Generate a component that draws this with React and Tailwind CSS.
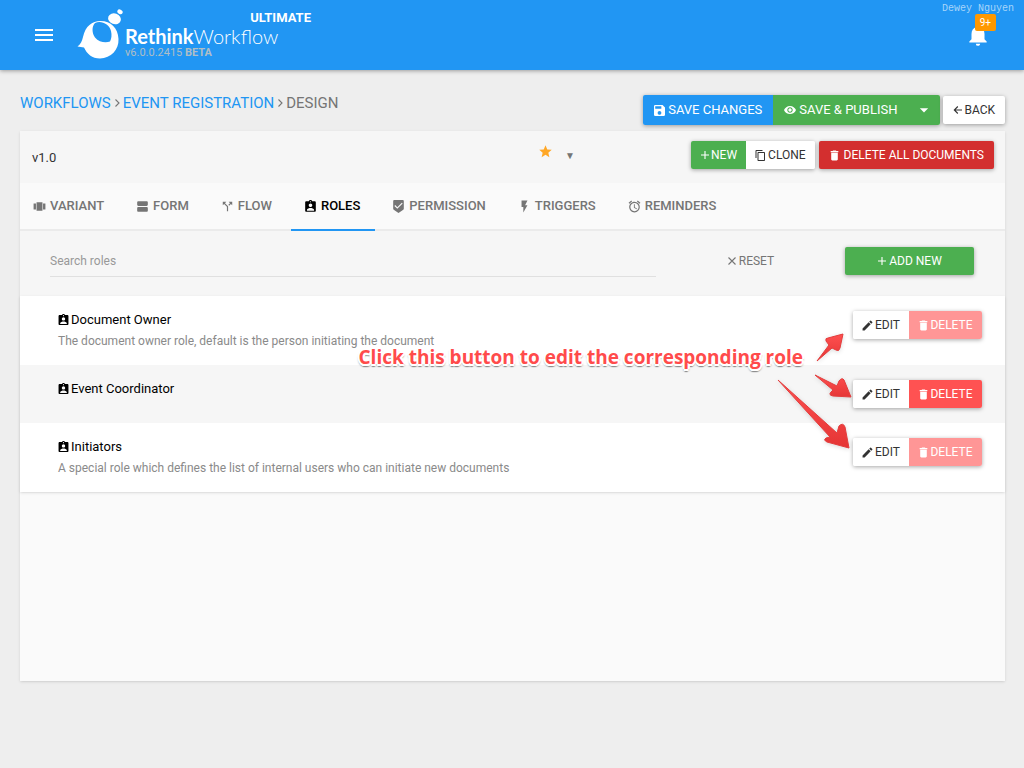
import { useState } from 'react';
import {
    MdMenu, MdNotifications, MdSave, MdRemoveRedEye, MdArrowDropDown, MdDelete, MdEdit, MdStar,
    MdViewCarousel, MdViewAgenda, MdCallSplit, MdAssignmentInd, MdBeenhere, MdFlashOn, MdAlarm, MdContentCopy,
} from 'react-icons/md';

const tabs = [
    { id: 'variant', label: 'VARIANT', icon: MdViewCarousel },
    { id: 'form', label: 'FORM', icon: MdViewAgenda },
    { id: 'flow', label: 'FLOW', icon: MdCallSplit },
    { id: 'roles', label: 'ROLES', icon: MdAssignmentInd },
    { id: 'permission', label: 'PERMISSION', icon: MdBeenhere },
    { id: 'triggers', label: 'TRIGGERS', icon: MdFlashOn },
    { id: 'reminders', label: 'REMINDERS', icon: MdAlarm },
];

const roles = [
    { name: 'Document Owner', description: 'The document owner role, default is the person initiating the document', locked: true },
    { name: 'Event Coordinator', description: '', locked: false },
    { name: 'Initiators', description: 'A special role which defines the list of internal users who can initiate new documents', locked: true },
];

const arrows = [
    'M47 36 L59 20 L56 16 Q55 13 58 13 L73 9 L70 23 Q69 27 66 25 L62 23 Z',
    'M45 50 L67 61 L69 56 Q72 52 74 55 L81 72 L63 71 Q58 70 61 67 L63 65 Z',
    'M8 55 L67 108 L69 101 Q73 97 75 102 L79 123 L57 117 Q53 115 56 113 L60 112 Z',
];

const PLUS = 'M5 1V9M1 5H9';
const CROSS = 'M1.5 1.5L8.5 8.5M8.5 1.5L1.5 8.5';
const BACK = 'M9 5H1.5M4.8 1.5L1.3 5L4.8 8.5';
const CHEVRON = 'M3.5 1.5L7 5L3.5 8.5';

const Thin = ({ d, className = '' }) => (
    <svg width="10" height="10" viewBox="0 0 10 10" fill="none" stroke="currentColor" strokeWidth="1.1" className={`shrink-0 ${className}`}>
        <path d={d} />
    </svg>
);

const Logo = () => (
    <a href="#home" className="relative ml-5 block h-[52px] w-[235px] text-white">
        <svg width="54" height="52" viewBox="-1 0 54 52" className="block">
            <path d="M0.500 37.500 C4 35 5 32 6 28 C8.500 17 15 12 23.500 12 C34 12 41 19 41.500 30 C42 41 34 49 23 49.500 C15 49.500 10 45 7 38.500 Z" fill="#fff" />
            <path d="M18 14 C24 11 32.500 15 34 22 C35 26 34.500 30 33 32.500 C29 34 22 33.500 18 28.500 C15 24.500 14.500 17.500 18 14 Z" fill="#2196f3" />
            <ellipse cx="37.500" cy="9.800" rx="6.500" ry="5.400" transform="rotate(20 37.500 9.800)" fill="#fff" />
            <ellipse cx="43" cy="2.800" rx="2.800" ry="2.200" transform="rotate(30 43 2.800)" fill="#fff" />
        </svg>
        <span className="absolute right-0 top-px text-[13px] font-bold leading-4">ULTIMATE</span>
        <span className="absolute left-[49px] top-4 font-[Lato,sans-serif] text-[20px] font-light leading-[22px]"><b className="font-bold">Rethink</b>Workflow</span>
        <span className="absolute bottom-0.5 left-[49px] text-[11px] leading-[13px] text-[#b0bec5]">v6.0.0.2415 <b>BETA</b></span>
    </a>
);

const RoleRow = ({ role }) => (
    <li className={`flex items-start justify-between pl-[38px] pr-[23px] ${role.description ? 'h-[69px] bg-white' : 'h-[58px] bg-[#f6f6f6]'}`}>
        <div className="pt-4">
            <h3 className="flex items-center gap-[2px] text-[13px] leading-4 text-black"><MdAssignmentInd viewBox="3 1 18 20" size={11} className="mb-0.5" />{role.name}</h3>
            {role.description && <p className="mt-[5px] text-xs leading-4 text-[#8a8a8a]">{role.description}</p>}
        </div>
        <div className="mt-[15px] flex shrink-0 rounded-xs text-xs shadow-[0_1px_4px_rgba(0,0,0,0.35)]">
            <button className="flex h-7 w-14 items-center justify-center gap-0.5 rounded-l-xs bg-white text-[#333]"><MdEdit viewBox="2 2 20 20" size={11} />EDIT</button>
            <button disabled={role.locked} className={`flex h-7 w-[73px] items-center justify-center gap-px rounded-r-xs text-white ${role.locked ? 'bg-[#ff9696]' : 'bg-[#ff5252]'}`}><MdDelete viewBox="2 2 20 20" size={11} />DELETE</button>
        </div>
    </li>
);

const App = () => {
    const [tab, setTab] = useState('roles');
    const [search, setSearch] = useState('');

    return (
        <div className="min-h-screen bg-[#eee] font-[Roboto,sans-serif] text-[#333]">
            {/* Top bar */}
            <header className="relative flex h-[70px] items-center bg-[#2196f3] pl-8 pr-[33px] text-white shadow-[0_1px_4px_rgba(0,0,0,0.35)]">
                <button aria-label="Menu"><MdMenu size={24} /></button>
                <Logo />
                <span className="absolute right-2.5 top-px font-['Liberation_Mono',monospace] text-[10px] leading-4 text-[#a6d5fa]">Dewey Nguyen</span>
                <button aria-label="Notifications" className="relative ml-auto"><MdNotifications size={26} />
                    <span className="absolute -right-[5px] -top-2 rounded-xs bg-[#ff9800] px-[5px] text-[10px] leading-[17px]">9+</span>
                </button>
            </header>

            <main className="pb-20 pl-5 pr-[19px] pt-[25px]">
                <div className="flex items-start justify-between">
                    <nav className="flex items-center text-[15px] leading-4 text-[#757575]">
                        <a href="#workflows" className="text-[#2196f3]">WORKFLOWS</a>
                        <Thin d={CHEVRON} className="mx-px" />
                        <a href="#event" className="text-[#2196f3]">EVENT REGISTRATION</a>
                        <Thin d={CHEVRON} className="mx-px" />
                        <span>DESIGN</span>
                    </nav>
                    <div className="flex items-center gap-[3px] text-[13px]">
                        <div className="flex h-[30px] rounded-xs text-white shadow-[0_1px_4px_rgba(0,0,0,0.35)]">
                            <button className="flex items-center gap-[3px] rounded-l-xs bg-[#2196f3] px-[11px]"><MdSave viewBox="3 3 18 18" size={11} />SAVE CHANGES</button>
                            <button className="flex items-center gap-[3px] bg-[#4caf50] px-[11px]"><MdRemoveRedEye viewBox="1 1 22 22" size={12} />SAVE &amp; PUBLISH</button>
                            <button aria-label="More" className="flex w-8 items-center justify-center rounded-r-xs bg-[#4caf50]"><MdArrowDropDown size={20} /></button>
                        </div>
                        <button className="flex h-7 items-center gap-px rounded-xs bg-white px-2.5 text-xs shadow-[0_1px_4px_rgba(0,0,0,0.35)]"><Thin d={BACK} />BACK</button>
                    </div>
                </div>

                <section className="mt-1.5 min-h-[550px] bg-[#fafafa] shadow">
                    {/* Version row */}
                    <div className="flex h-[52px] items-start bg-[#f6f6f6] pl-3 pr-[11px] pt-2.5">
                        <label htmlFor="version" className="w-[506px] pt-[7px] text-[13px] leading-5">v1.0</label>
                        <MdStar size={15} className="mt-[3px] text-[#ffa726]" />
                        <button id="version" aria-label="Choose version" className="ml-3 text-[10px] leading-[30px] text-[#757575]">▼</button>
                        <div className="ml-auto flex gap-1 text-xs">
                            <div className="flex h-7 rounded-xs shadow-[0_1px_4px_rgba(0,0,0,0.35)]">
                                <button className="flex items-center gap-px rounded-l-xs bg-[#4caf50] px-[9px] text-white"><Thin d={PLUS} />NEW</button>
                                <button className="flex items-center gap-0.5 rounded-r-xs bg-white px-[9px]"><MdContentCopy viewBox="1 1 22 22" size={11} />CLONE</button>
                            </div>
                            <button className="flex h-7 items-center gap-1 rounded-xs bg-[#d32f2f] px-2.5 text-white shadow-[0_1px_4px_rgba(0,0,0,0.35)]"><MdDelete viewBox="2 2 20 20" size={11} />DELETE ALL DOCUMENTS</button>
                        </div>
                    </div>

                    <div role="tablist" className="flex h-12 gap-1 border-b-2 border-[#ebebeb]">
                        {tabs.map(t => (
                            <button
                                key={t.id}
                                role="tab"
                                aria-selected={tab === t.id}
                                onClick={() => setTab(t.id)}
                                className={`-mb-0.5 flex items-center gap-1 border-b-2 pl-[13px] pr-[15px] text-[13px] font-medium ${
                                    tab === t.id ? 'border-[#2196f3] text-black' : 'border-transparent text-[#757575]'
                                }`}
                            >
                                <t.icon viewBox="1 1 22 22" size={13} />{t.label}
                            </button>
                        ))}
                    </div>

                    <div className="flex h-[65px] items-start bg-[#f6f6f6] pl-[30px] pr-[31px] pt-4 text-xs">
                        <input
                            aria-label="Search roles"
                            placeholder="Search roles"
                            value={search}
                            onChange={e => setSearch(e.target.value)}
                            className="h-[30px] min-w-0 flex-1 border-b border-[#e0e0e0] pb-0.5 outline-none placeholder:text-[#999]"
                        />
                        <button onClick={() => setSearch('')} className="flex h-7 w-[189px] items-center justify-center gap-0.5 text-[#757575]"><Thin d={CROSS} />RESET</button>
                        <button className="flex h-7 w-[129px] items-center justify-center gap-0.5 rounded-xs bg-[#4caf50] text-white shadow-[0_1px_4px_rgba(0,0,0,0.35)]"><Thin d={PLUS} />ADD NEW</button>
                    </div>

                    <div className="relative shadow">
                        <ul>
                            {roles.map(role => <RoleRow key={role.name} role={role} />)}
                        </ul>

                        {/* Callout */}
                        <p className="pointer-events-none absolute right-[202px] top-12 whitespace-nowrap font-['Open_Sans',sans-serif] text-[19px] font-bold leading-[26px] text-[#ff4b4b] [text-shadow:2px_0_#fff,-2px_0_#fff,0_2px_#fff,0_-2px_#fff,1px_2px_#fff,-1px_2px_#fff,2px_-1px_#fff,-2px_-1px_#fff,0_3px_1px_#888,1px_2px_2px_#999,-1px_2px_2px_#999]">
                            Click this button to edit the corresponding role
                        </p>
                        <svg width="90" height="130" viewBox="0 0 90 130" className="pointer-events-none absolute right-[145px] top-[29px] drop-shadow-sm">
                            <defs>
                                <linearGradient id="arrow" x1="0" y1="0" x2="0" y2="1">
                                    <stop offset="0" stopColor="#ff5050" />
                                    <stop offset="1" stopColor="#e53535" />
                                </linearGradient>
                            </defs>
                            {arrows.map(d => <path key={d} d={d} fill="url(#arrow)" stroke="#e23c3c" strokeWidth="1" strokeLinejoin="round" />)}
                        </svg>
                    </div>
                </section>
            </main>
        </div>
    );
};

export default App;
